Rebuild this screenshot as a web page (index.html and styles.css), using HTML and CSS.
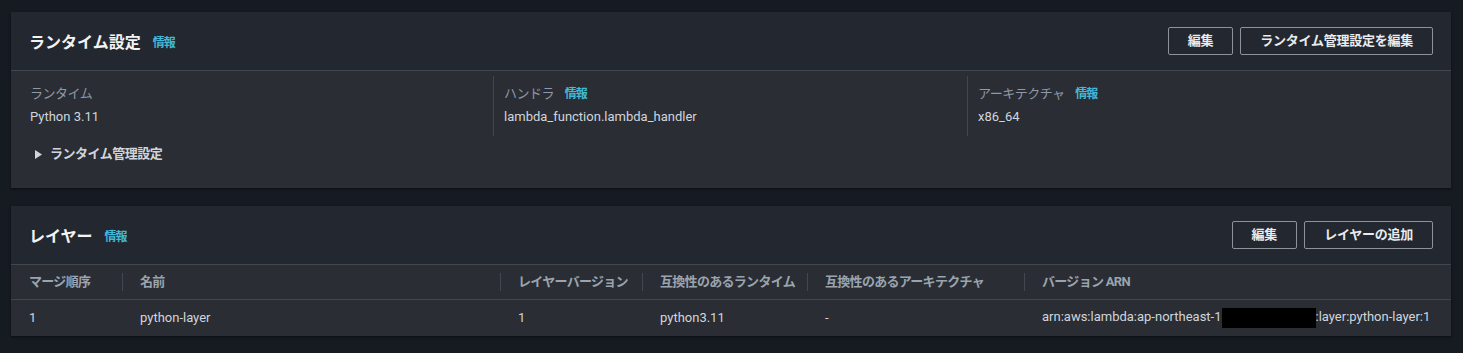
FILE: index.html
```html
<!DOCTYPE html>
<html lang="ja">

<head>
    <meta charset="utf-8">
    <title>ランタイム設定</title>
    <link rel="stylesheet" href="styles.css">
</head>

<body>
    <div class="card">
        <div class="card-header">
            <h2 class="title">ランタイム設定 <a href="javascript:;" class="info">情報</a></h2>
            <div class="actions">
                <a href="javascript:;" class="btn">編集</a>
                <a href="javascript:;" class="btn">ランタイム管理設定を編集</a>
            </div>
        </div>
        <div class="card-body">
            <div class="columns">
                <div class="col">
                    <div class="label">ランタイム</div>
                    <div class="value">Python 3.11</div>
                </div>
                <div class="col">
                    <div class="label">ハンドラ <a href="javascript:;" class="info">情報</a></div>
                    <div class="value">lambda_function.lambda_handler</div>
                </div>
                <div class="col">
                    <div class="label">アーキテクチャ <a href="javascript:;" class="info">情報</a></div>
                    <div class="value">x86_64</div>
                </div>
            </div>
            <a href="javascript:;" class="expand">
                <svg class="caret" width="7" height="9" viewBox="0 0 7 9"><polygon points="0,0 7,4.5 0,9" fill="#d1d5db"/></svg>
                ランタイム管理設定
            </a>
        </div>
    </div>

    <div class="card">
        <div class="card-header">
            <h2 class="title">レイヤー <a href="javascript:;" class="info">情報</a></h2>
            <div class="actions">
                <a href="javascript:;" class="btn">編集</a>
                <a href="javascript:;" class="btn">レイヤーの追加</a>
            </div>
        </div>
        <table class="layers">
            <thead>
                <tr>
                    <th class="c1"><div class="th-in first">マージ順序</div></th>
                    <th class="c2"><div class="th-in">名前</div></th>
                    <th class="c3"><div class="th-in">レイヤーバージョン</div></th>
                    <th class="c4"><div class="th-in">互換性のあるランタイム</div></th>
                    <th class="c5"><div class="th-in">互換性のあるアーキテクチャ</div></th>
                    <th class="c6"><div class="th-in">バージョン ARN</div></th>
                </tr>
            </thead>
            <tbody>
                <tr>
                    <td>1</td>
                    <td>python-layer</td>
                    <td>1</td>
                    <td>python3.11</td>
                    <td>-</td>
                    <td>arn:aws:lambda:ap-northeast-1<span class="redact"></span>:layer:python-layer:1</td>
                </tr>
            </tbody>
        </table>
    </div>
</body>

</html>
```

FILE: styles.css
```css
* {
    margin: 0;
    padding: 0;
    box-sizing: border-box;
    text-decoration: none;
}

body {
    background: #161a21;
    padding: 12px 12px 0 11px;
    font-family: Roboto, "Noto Sans CJK JP", sans-serif;
    font-size: 14px;
    color: #d1d5db;
}

.card {
    background: #2a2d33;
    box-shadow: 0 1px 2px rgba(0, 0, 0, 0.5);
    margin-bottom: 18px;
}

.card-header {
    background: #232730;
    height: 59px;
    padding: 0 18px;
    display: flex;
    align-items: center;
    justify-content: space-between;
    border-bottom: 1px solid #414750;
}

.title {
    font-size: 16px;
    font-weight: bold;
    color: #f2f3f3;
    display: flex;
    align-items: center;
    gap: 12px;
}

.info {
    color: #44b9d6;
    font-size: 12px;
    font-weight: bold;
    letter-spacing: -1px;
}

.label .info {
    margin-left: 8px;
}

.actions {
    display: flex;
    gap: 7px;
}

.btn {
    display: block;
    height: 28px;
    line-height: 26px;
    padding: 0 19px;
    border: 1px solid #8d9399;
    border-radius: 2px;
    color: #e9ebed;
    font-weight: bold;
    font-size: 13px;
    letter-spacing: -0.25px;
}

.card-body {
    padding: 5px 10px 24px 8px;
}

.columns {
    display: grid;
    grid-template-columns: repeat(3, 1fr);
}

.col {
    padding: 8px 0 9px 10px;
    border-left: 1px solid #414750;
}

.col:first-child {
    border-left-color: transparent;
}

.label {
    line-height: 20px;
    color: #8d99a8;
    font-size: 13px;
    letter-spacing: -0.5px;
}

.value {
    margin-top: 3px;
    line-height: 20px;
    font-size: 13px;
}

.expand {
    display: flex;
    align-items: center;
    margin: 8px 0 0 16px;
    line-height: 20px;
    color: #d1d5db;
    font-weight: bold;
    font-size: 13px;
    letter-spacing: -0.5px;
}

.caret {
    margin-right: 8px;
}

.layers {
    width: 100%;
    border-collapse: collapse;
    table-layout: fixed;
}

.layers th {
    text-align: left;
    padding: 8px 0;
    border-bottom: 1px solid #414750;
    background: #2a2d33;
}

.th-in {
    border-left: 1px solid #414750;
    padding-left: 17px;
    line-height: 18px;
    font-size: 13px;
    font-weight: bold;
    color: #9aa4af;
    letter-spacing: -0.7px;
}

.th-in.first {
    border-left-color: transparent;
}

.c1 { width: 111px; }
.c2 { width: 378px; }
.c3 { width: 142px; }
.c4 { width: 165px; }
.c5 { width: 217px; }

.layers td {
    padding: 0 0 0 18px;
    height: 36px;
    font-size: 13px;
    white-space: nowrap;
}

.redact {
    display: inline-block;
    width: 94px;
    height: 20px;
    background: #000;
    vertical-align: middle;
}
```
